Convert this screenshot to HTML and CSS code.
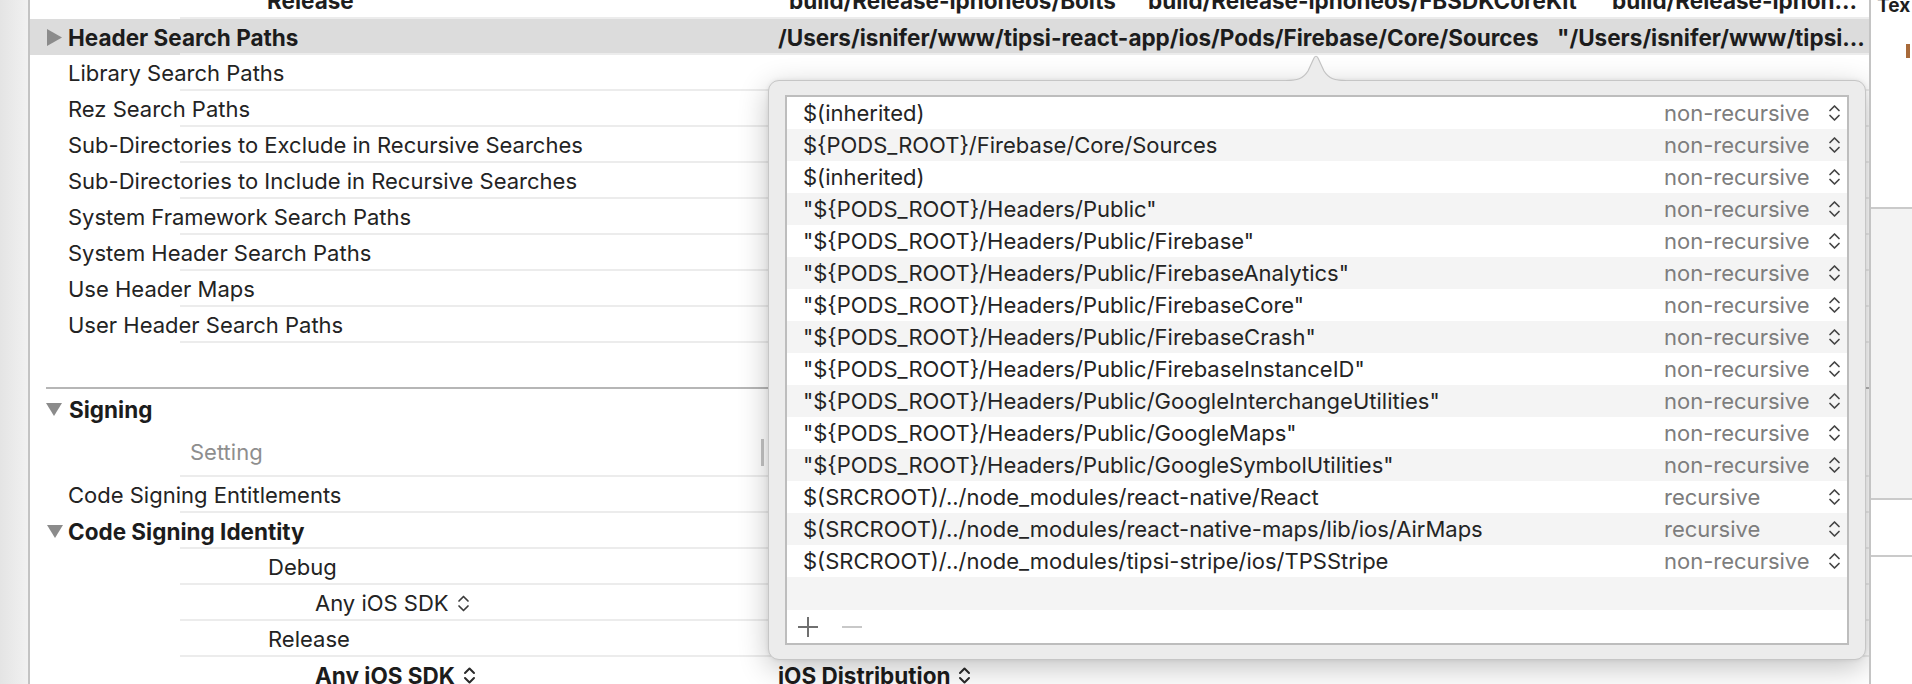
FILE: index.html
```html
<!DOCTYPE html>
<html lang="en">
<head>
<meta charset="utf-8">
<title>Build Settings</title>
<link rel="stylesheet" href="styles.css">
</head>
<body>
<div class="window">
  <div class="gutter"></div>
  <div class="main">
    <div class="row top-row">
      <span class="th">Release</span>
      <span class="th">build/Release-iphoneos/Bolts</span>
      <span class="th">build/Release-iphoneos/FBSDKCoreKit</span>
      <span class="th">build/Release-iphon…</span>
    </div>
    <div class="row selected">
      <span class="disc"><svg width="15" height="17" viewBox="0 0 15 17"><path d="M0 0 L15 8.5 L0 17 Z" fill="#8b8b8b"/></svg></span>
      <span class="name bold">Header Search Paths</span>
      <span class="val bold">/Users/isnifer/www/tipsi-react-app/ios/Pods/Firebase/Core/Sources</span>
      <span class="val2 bold">"/Users/isnifer/www/tipsi…</span>
    </div>
    <div class="row"><span class="disc"></span><span class="name">Library Search Paths</span></div>
    <div class="row"><span class="disc"></span><span class="name">Rez Search Paths</span></div>
    <div class="row"><span class="disc"></span><span class="name">Sub-Directories to Exclude in Recursive Searches</span></div>
    <div class="row"><span class="disc"></span><span class="name">Sub-Directories to Include in Recursive Searches</span></div>
    <div class="row"><span class="disc"></span><span class="name">System Framework Search Paths</span></div>
    <div class="row"><span class="disc"></span><span class="name">System Header Search Paths</span></div>
    <div class="row"><span class="disc"></span><span class="name">Use Header Maps</span></div>
    <div class="row"><span class="disc"></span><span class="name">User Header Search Paths</span></div>
    <div class="spacer"></div>
    <div class="section-divider"></div>
    <div class="section-head">
      <span class="disc"><svg width="16" height="13" viewBox="0 0 16 13"><path d="M0 0 L16 0 L8 13 Z" fill="#8b8b8b"/></svg></span>
      <span class="name bold sec-title">Signing</span>
    </div>
    <div class="row setting-row">
      <span class="disc"></span>
      <span class="setting-label">Setting</span>
      <span class="col-grip"></span>
    </div>
    <div class="row"><span class="disc"></span><span class="name">Code Signing Entitlements</span></div>
    <div class="row">
      <span class="disc"><svg width="16" height="13" viewBox="0 0 16 13"><path d="M0 0 L16 0 L8 13 Z" fill="#8b8b8b"/></svg></span>
      <span class="name bold">Code Signing Identity</span>
    </div>
    <div class="row"><span class="disc"></span><span class="name lvl1">Debug</span></div>
    <div class="row"><span class="disc"></span><span class="name lvl2">Any iOS SDK<svg class="stepper" width="13" height="19" viewBox="0 0 13 19"><path d="M2 7 L6.5 2.5 L11 7 M2 12 L6.5 16.5 L11 12" fill="none" stroke="#3c3c3c" stroke-width="1.7" stroke-linecap="round" stroke-linejoin="round"/></svg></span></div>
    <div class="row"><span class="disc"></span><span class="name lvl1">Release</span></div>
    <div class="row">
      <span class="disc"></span>
      <span class="name lvl2 bold">Any iOS SDK<svg class="stepper" width="13" height="19" viewBox="0 0 13 19"><path d="M2 7 L6.5 2.5 L11 7 M2 12 L6.5 16.5 L11 12" fill="none" stroke="#2a2a2a" stroke-width="2" stroke-linecap="round" stroke-linejoin="round"/></svg></span>
      <span class="val bold">iOS Distribution<svg class="stepper" width="13" height="19" viewBox="0 0 13 19"><path d="M2 7 L6.5 2.5 L11 7 M2 12 L6.5 16.5 L11 12" fill="none" stroke="#2a2a2a" stroke-width="2" stroke-linecap="round" stroke-linejoin="round"/></svg></span>
    </div>

    <div class="popover">
      <svg class="popover-arrow" width="60" height="29" viewBox="0 0 60 29">
        <path d="M0 26.5 C 11 26.5, 17 25, 22 17 L 28 4 Q 30 0.5, 32 4 L 38 17 C 43 25, 49 26.5, 60 26.5 L 60 29 L 0 29 Z" fill="#ececec"/>
        <path d="M0 26.5 C 11 26.5, 17 25, 22 17 L 28 4 Q 30 0.5, 32 4 L 38 17 C 43 25, 49 26.5, 60 26.5" fill="none" stroke="#c3c3c3" stroke-width="1.2"/>
      </svg>
      <div class="paths">
        <div class="prow"><span class="ppath">$(inherited)</span><span class="pmode">non-recursive</span><span class="pstep"></span></div>
        <div class="prow"><span class="ppath">${PODS_ROOT}/Firebase/Core/Sources</span><span class="pmode">non-recursive</span><span class="pstep"></span></div>
        <div class="prow"><span class="ppath">$(inherited)</span><span class="pmode">non-recursive</span><span class="pstep"></span></div>
        <div class="prow"><span class="ppath">"${PODS_ROOT}/Headers/Public"</span><span class="pmode">non-recursive</span><span class="pstep"></span></div>
        <div class="prow"><span class="ppath">"${PODS_ROOT}/Headers/Public/Firebase"</span><span class="pmode">non-recursive</span><span class="pstep"></span></div>
        <div class="prow"><span class="ppath">"${PODS_ROOT}/Headers/Public/FirebaseAnalytics"</span><span class="pmode">non-recursive</span><span class="pstep"></span></div>
        <div class="prow"><span class="ppath">"${PODS_ROOT}/Headers/Public/FirebaseCore"</span><span class="pmode">non-recursive</span><span class="pstep"></span></div>
        <div class="prow"><span class="ppath">"${PODS_ROOT}/Headers/Public/FirebaseCrash"</span><span class="pmode">non-recursive</span><span class="pstep"></span></div>
        <div class="prow"><span class="ppath">"${PODS_ROOT}/Headers/Public/FirebaseInstanceID"</span><span class="pmode">non-recursive</span><span class="pstep"></span></div>
        <div class="prow"><span class="ppath">"${PODS_ROOT}/Headers/Public/GoogleInterchangeUtilities"</span><span class="pmode">non-recursive</span><span class="pstep"></span></div>
        <div class="prow"><span class="ppath">"${PODS_ROOT}/Headers/Public/GoogleMaps"</span><span class="pmode">non-recursive</span><span class="pstep"></span></div>
        <div class="prow"><span class="ppath">"${PODS_ROOT}/Headers/Public/GoogleSymbolUtilities"</span><span class="pmode">non-recursive</span><span class="pstep"></span></div>
        <div class="prow"><span class="ppath">$(SRCROOT)/../node_modules/react-native/React</span><span class="pmode">recursive</span><span class="pstep"></span></div>
        <div class="prow"><span class="ppath">$(SRCROOT)/../node_modules/react-native-maps/lib/ios/AirMaps</span><span class="pmode">recursive</span><span class="pstep"></span></div>
        <div class="prow"><span class="ppath">$(SRCROOT)/../node_modules/tipsi-stripe/ios/TPSStripe</span><span class="pmode">non-recursive</span><span class="pstep"></span></div>
        <div class="prow empty"></div>
        <div class="pfoot">
          <svg class="btn" width="22" height="22" viewBox="0 0 22 22"><path d="M11 1 V21 M1 11 H21" stroke="#707070" stroke-width="2"/></svg>
          <svg class="btn" width="22" height="22" viewBox="0 0 22 22"><path d="M1 11 H21" stroke="#c8c8c8" stroke-width="2"/></svg>
        </div>
      </div>
    </div>
  </div>
  <aside class="inspector">
    <div class="insp-top">
      <span class="insp-title">Tex</span>
      <span class="insp-mark"></span>
    </div>
    <div class="insp-field"></div>
    <div class="insp-gap"></div>
    <div class="insp-rest"></div>
  </aside>
</div>
</body>
</html>
```
FILE: styles.css
```css
html, body {
  margin: 0;
  padding: 0;
}
body {
  width: 1912px;
  height: 684px;
  overflow: hidden;
  background: #ffffff;
  font-family: Inter, "Noto Sans", "Liberation Sans", sans-serif;
  font-size: 22px;
  color: #232323;
}
.window {
  display: flex;
  height: 684px;
}
.gutter {
  width: 28px;
  flex: none;
  background: linear-gradient(to right, #e4e4e4, #f1f1f1);
  border-right: 2px solid #c3c3c3;
}
.main {
  width: 1839px;
  flex: none;
  position: relative;
  overflow: hidden;
  background: #ffffff;
}
.row {
  display: flex;
  align-items: center;
  height: 36px;
  box-sizing: border-box;
  padding-left: 17px;
  white-space: nowrap;
  background-image: linear-gradient(#ececec, #ececec);
  background-repeat: no-repeat;
  background-size: calc(100% - 150px) 2px;
  background-position: right bottom;
}
.top-row {
  display: grid;
  grid-template-columns: 522px 359px 464px auto;
  align-items: start;
  height: 19px;
  overflow: hidden;
  padding-left: 237px;
}
.th {
  font-weight: 700;
  font-size: 22.5px;
  line-height: 22px;
  margin-top: -10px;
  color: #1e1e1e;
}
.selected {
  background-color: #dcdcdc;
}
.disc {
  width: 21px;
  flex: none;
  display: flex;
  align-items: center;
}
.name {
  width: 710px;
  flex: none;
  display: flex;
  align-items: center;
}
.bold {
  font-weight: 700;
  font-size: 22.5px;
  color: #1c1c1c;
}
.val {
  width: 779px;
  flex: none;
  overflow: hidden;
  display: flex;
  align-items: center;
}
.val2 {
  flex: none;
}
.lvl1 {
  padding-left: 200px;
  width: 510px;
}
.lvl2 {
  padding-left: 247px;
  width: 463px;
}
.stepper {
  margin-left: 8px;
  flex: none;
}
.spacer {
  height: 44px;
}
.section-divider {
  height: 2px;
  margin-left: 16px;
  background: #b6b6b6;
}
.section-head {
  display: flex;
  align-items: center;
  height: 40px;
  padding-left: 16px;
}
.sec-title {
  padding-left: 2px;
}
.setting-row {
  height: 48px;
}
.setting-label {
  width: 571px;
  flex: none;
  padding-left: 122px;
  color: #8e8e8e;
  padding-bottom: 2px;
}
.col-grip {
  width: 3px;
  height: 27px;
  background: #c4c4c4;
  margin-bottom: 2px;
}

/* popover */
.popover {
  position: absolute;
  left: 738px;
  top: 80px;
  width: 1098px;
  height: 580px;
  box-sizing: border-box;
  padding: 14px 16px 14px 16px;
  background: #ececec;
  border: 1px solid #c6c6c6;
  border-radius: 11px;
  box-shadow: 0 8px 30px rgba(0, 0, 0, 0.24), 0 0 4px rgba(0, 0, 0, 0.08);
}
.popover-arrow {
  position: absolute;
  left: 517px;
  top: -27px;
}
.paths {
  height: 550px;
  box-sizing: border-box;
  border: 2px solid #bdbdbd;
  background: #ffffff;
  display: flex;
  flex-direction: column;
}
.prow {
  display: grid;
  grid-template-columns: 861px 164px 13px;
  align-items: center;
  height: 32px;
  flex: none;
  padding-left: 16px;
  white-space: nowrap;
  color: #242424;
}
.prow:nth-child(even) {
  background: #f4f4f4;
}
.prow.empty {
  height: 33px;
}
.pmode {
  color: #7d7d7d;
}
.pstep {
  width: 13px;
  height: 18px;
  background-image: url("data:image/svg+xml;utf8,<svg xmlns='http://www.w3.org/2000/svg' width='13' height='18' viewBox='0 0 13 18'><path d='M2 6.5 L6.5 2 L11 6.5 M2 11.5 L6.5 16 L11 11.5' fill='none' stroke='%23454545' stroke-width='1.7' stroke-linecap='round' stroke-linejoin='round'/></svg>");
  background-repeat: no-repeat;
}
.pfoot {
  flex: 1;
  display: flex;
  align-items: center;
  gap: 22px;
  padding-left: 10px;
  background: #ffffff;
}
.btn {
  flex: none;
}

/* inspector */
.inspector {
  flex: 1;
  border-left: 2px solid #c4c4c4;
  display: flex;
  flex-direction: column;
  background: #ffffff;
  overflow: hidden;
}
.insp-top {
  height: 207px;
  flex: none;
  border-bottom: 2px solid #cacaca;
  padding-left: 6px;
  display: flex;
  flex-direction: column;
  align-items: flex-start;
}
.insp-title {
  font-weight: 700;
  font-size: 19px;
  line-height: 22px;
  margin-top: -5px;
  color: #1e1e1e;
}
.insp-mark {
  width: 4px;
  height: 14px;
  margin-top: 27px;
  margin-left: 29px;
  background: #a86a3a;
}
.insp-field {
  height: 289px;
  flex: none;
  background: #f3f3f3;
  border-bottom: 2px solid #cacaca;
}
.insp-gap {
  height: 55px;
  flex: none;
  border-bottom: 2px solid #cacaca;
}
.insp-rest {
  flex: 1;
}
```
